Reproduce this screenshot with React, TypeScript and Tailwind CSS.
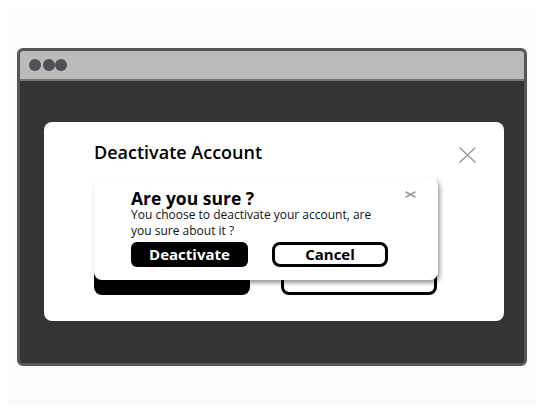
import React from "react";

const font = { fontFamily: '"Open Sans", "Noto Sans", sans-serif' };

const CloseIcon: React.FC<{ w: number; h: number; stroke?: number; className?: string }> = ({ w, h, stroke = 1.5, className }) => (
  <svg width={w} height={h} viewBox={`0 0 ${w} ${h}`} className={className}>
    <line x1="1" y1="1" x2={w - 1} y2={h - 1} stroke="#9a9a9a" strokeWidth={stroke} strokeLinecap="round" />
    <line x1={w - 1} y1="1" x2="1" y2={h - 1} stroke="#9a9a9a" strokeWidth={stroke} strokeLinecap="round" />
  </svg>
);

const ConfirmPopup: React.FC = () => (
  <div className="absolute left-[50px] top-[55px] w-[344px] h-[103px] rounded-lg bg-white shadow-[2px_3px_4px_rgba(0,0,0,0.4)] pl-[37px] pt-[13px]">
    <CloseIcon w={11} h={7} className="absolute left-[311px] top-[14px]" />
    <h3 className="text-[17.5px] leading-[17px] font-bold text-black">Are you sure ?</h3>
    <p className="text-[12px] leading-[15.5px] text-[#111] w-[250px]">
      You choose to deactivate your account, are you sure about it ?
    </p>
    <div className="flex gap-[24px] mt-[4px]">
      <button className="w-[117px] h-[25px] rounded-md bg-black text-white text-[15px] font-bold flex items-center justify-center">
        Deactivate
      </button>
      <button className="w-[116px] h-[25px] rounded-lg border-[3px] border-black bg-white text-black text-[15px] font-bold flex items-center justify-center">
        Cancel
      </button>
    </div>
  </div>
);

const App: React.FC = () => {
  return (
    <div className="w-[544px] h-[414px] bg-white p-2" style={font}>
      <div className="h-full bg-[#fcfbfc] pl-[9px] pt-[40px]">
        {/* browser window */}
        <div className="w-[510px] h-[318px] rounded-md border-[3px] border-[#55555a] bg-[#343434] overflow-hidden flex flex-col">
          <div className="h-[30px] bg-[#bcbbba] border-b-[2px] border-[#777] flex items-center pl-[9px]">
            <span className="w-[12px] h-[12px] rounded-full bg-[#4f4f55]" />
            <span className="w-[12px] h-[12px] rounded-full bg-[#4f4f55] ml-[2px]" />
            <span className="w-[12px] h-[12px] rounded-full bg-[#4f4f55]" />
          </div>
          <div className="flex-1 pl-[24px] pt-[41px]">
            {/* modal */}
            <div className="relative w-[460px] h-[199px] rounded-lg bg-white flex flex-col pl-[50px] pt-[20px] pb-[26px]">
              <h2 className="text-[18px] leading-[21px] font-semibold text-black">Deactivate Account</h2>
              <CloseIcon w={17} h={16} stroke={1.6} className="absolute left-[415px] top-[25px]" />
              <div className="mt-auto flex gap-[31px]">
                <div className="w-[156px] h-[36px] rounded-lg bg-black" />
                <div className="w-[156px] h-[36px] rounded-lg border-[3px] border-black" />
              </div>
              <ConfirmPopup />
            </div>
          </div>
        </div>
      </div>
    </div>
  );
};

export default App;
